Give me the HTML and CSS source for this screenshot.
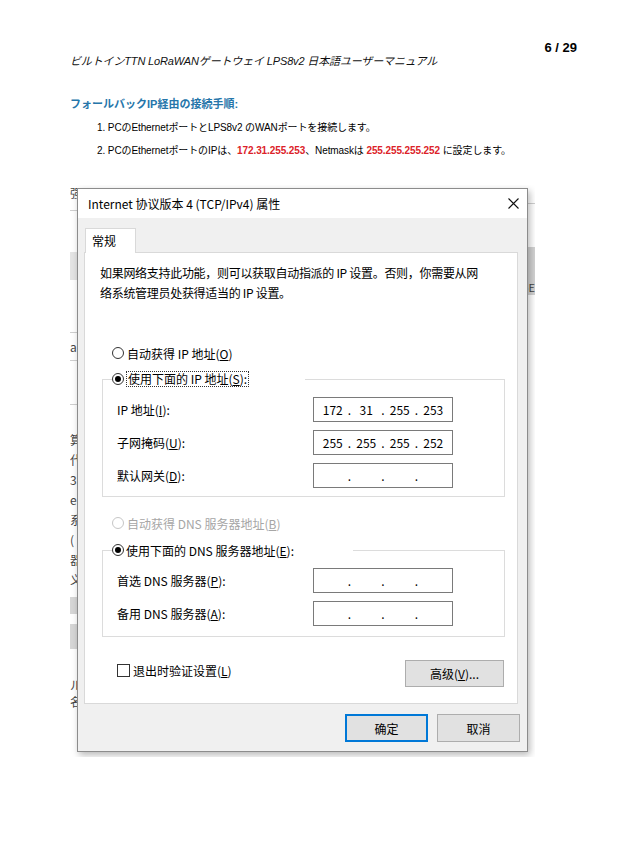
FILE: index.html
```html
<!DOCTYPE html>
<html lang="ja">
<head>
  <meta charset="UTF-8" />
  <title>LPS8v2 日本語ユーザーマニュアル - 6</title>
  <link rel="stylesheet" href="styles.css">
</head>
<body>
  <div class="page">
    <div class="pageno">6 / 29</div>
    <div class="doc-title">ビルトインTTN LoRaWANゲートウェイ LPS8v2 日本語ユーザーマニュアル</div>

    <h2 class="section">フォールバックIP経由の接続手順:</h2>
    <p class="step">1. PCのEthernetポートとLPS8v2 のWANポートを接続します。</p>
    <p class="step">2. PCのEthernetポートのIPは、<span class="red">172.31.255.253</span>、Netmaskは <span class="red">255.255.255.252</span> に設定します。</p>

    <!-- スクリーンショット -->
    <div class="shot" lang="zh-CN">
      <div class="bgwin">
        <div class="bg-left">
          <div class="ch">强</div>
          <div class="hline l1"></div>
          <div class="gblock b1"></div>
          <div class="hline l2"></div>
          <div class="ch ar">ar</div>
          <div class="hline l3"></div>
          <div class="hline l4"></div>
          <div class="chars">算<br>代<br>3r<br>e<br>系<br>(<br>器<br>义</div>
          <div class="gblock b2"></div>
          <div class="gblock b3"></div>
          <div class="chars c2">ル<br>名</div>
        </div>
        <div class="bg-right">
          <div class="hline r1"></div>
          <div class="gblock rb">IPoE</div>
        </div>
      </div>

      <div class="dialog">
        <div class="titlebar">
          <span>Internet 协议版本 4 (TCP/IPv4) 属性</span>
          <svg width="11" height="11" viewBox="0 0 11 11"><path d="M0.5 0.5l10 10M10.5 0.5l-10 10" stroke="#111" stroke-width="1.1" fill="none"/></svg>
        </div>
        <div class="dlg-body">
          <div class="tab">常规</div>
          <div class="panel">
            <p class="desc">如果网络支持此功能，则可以获取自动指派的 IP 设置。否则，你需要从网<br>络系统管理员处获得适当的 IP 设置。</p>

            <div class="opt first"><span class="radio"></span><span>自动获得 IP 地址(<u>O</u>)</span></div>

            <fieldset class="grp">
              <legend class="lg-ip"><span class="radio on"></span><span class="focus">使用下面的 IP 地址(<u>S</u>):</span></legend>
              <div class="frow top">
                <label>IP 地址(<u>I</u>):</label>
                <div class="ipbox"><span>172</span><span>.</span><span>31</span><span>.</span><span>255</span><span>.</span><span>253</span></div>
              </div>
              <div class="frow">
                <label>子网掩码(<u>U</u>):</label>
                <div class="ipbox"><span>255</span><span>.</span><span>255</span><span>.</span><span>255</span><span>.</span><span>252</span></div>
              </div>
              <div class="frow">
                <label>默认网关(<u>D</u>):</label>
                <div class="ipbox"><span></span><span>.</span><span></span><span>.</span><span></span><span>.</span><span></span></div>
              </div>
            </fieldset>

            <div class="opt disabled"><span class="radio off"></span><span>自动获得 DNS 服务器地址(<u>B</u>)</span></div>

            <fieldset class="grp dns">
              <legend class="lg-dns"><span class="radio on"></span><span>使用下面的 DNS 服务器地址(<u>E</u>):</span></legend>
              <div class="frow top">
                <label>首选 DNS 服务器(<u>P</u>):</label>
                <div class="ipbox"><span></span><span>.</span><span></span><span>.</span><span></span><span>.</span><span></span></div>
              </div>
              <div class="frow">
                <label>备用 DNS 服务器(<u>A</u>):</label>
                <div class="ipbox"><span></span><span>.</span><span></span><span>.</span><span></span><span>.</span><span></span></div>
              </div>
            </fieldset>

            <div class="bottom-row">
              <div class="check"><span class="box"></span><span>退出时验证设置(<u>L</u>)</span></div>
              <button class="btn adv">高级(<u>V</u>)...</button>
            </div>
          </div>

          <div class="footer">
            <button class="btn ok">确定</button>
            <button class="btn">取消</button>
          </div>
        </div>
      </div>
    </div>
  </div>
</body>
</html>
```

FILE: styles.css
```css
body { margin: 0; background: #fff; color: #000; font-family: "Liberation Sans", "Noto Sans CJK JP", sans-serif; }
.page {
  width: 638px;
  box-sizing: border-box;
  padding: 40px 61px 0 70px;
}
.pageno { text-align: right; font-weight: bold; font-size: 13px; line-height: 15px; }
.doc-title { font-style: italic; font-size: 11px; line-height: 13px; letter-spacing: -0.15px; color: #111; }
.section {
  margin: 29px 0 10px;
  font-size: 11px;
  line-height: 14px;
  font-weight: bold;
  color: #2676aa;
}
.step { margin: 0 0 9px 27px; font-size: 10px; line-height: 14px; letter-spacing: -0.1px; }
.step .red { color: #dc2229; font-weight: bold; }

/* screenshot */
.shot {
  display: grid;
  width: 465px;
  height: 572px;
  margin-top: 27px;
  overflow: hidden;
  font-family: "Noto Sans CJK SC", sans-serif;
  font-size: 12px;
}
.bgwin {
  grid-area: 1 / 1;
  display: flex;
  justify-content: space-between;
  background: #fff;
}
.bg-left { width: 24px; color: #444; }
.bg-left .ch { line-height: 16px; }
.hline { height: 1px; background: #cfcfcf; }
.gblock { background: #e4e4e4; }
.l1 { margin-top: 9px; }
.b1 { margin-top: 41px; height: 28px; }
.l2 { margin-top: 52px; }
.bg-left .ar { margin-top: 7px; line-height: 14px; }
.l3 { margin-top: 6px; }
.l4 { margin-top: 43px; }
.chars { margin-top: 25px; line-height: 20px; }
.b2 { margin-top: 7px; height: 17px; background: #d6d6d6; }
.b3 { margin-top: 10px; height: 25px; background: #d6d6d6; }
.chars.c2 { margin-top: 27px; line-height: 17px; }
.bg-right { width: 30px; }
.r1 { margin-top: 18px; }
.rb {
  margin-top: 43px;
  height: 48px;
  background: #d2d2d2;
  color: #444;
  font-size: 11px;
  display: flex;
  align-items: flex-end;
  justify-content: flex-end;
  line-height: 16px;
  white-space: nowrap;
  overflow: hidden;
}

.dialog {
  grid-area: 1 / 1;
  align-self: start;
  justify-self: start;
  margin: 3px 0 0 7px;
  width: 451px;
  box-sizing: border-box;
  border: 1px solid #8c8c8c;
  background: #f0f0f0;
  box-shadow: 2px 3px 7px rgba(0,0,0,0.28);
}
.titlebar {
  height: 29px;
  background: #fff;
  display: flex;
  align-items: center;
  justify-content: space-between;
  padding: 0 8px 0 10px;
}
.dlg-body { padding: 10px 9px 9px 6px; }
.tab {
  position: relative;
  z-index: 1;
  width: 51px;
  height: 25px;
  margin: 0 0 -1px 1px;
  box-sizing: border-box;
  border: 1px solid #d9d9d9;
  border-bottom: none;
  background: #fff;
  padding-left: 6px;
  line-height: 24px;
}
.panel {
  background: #fff;
  border: 1px solid #d9d9d9;
  padding: 10px 12px 16px 15px;
}
.desc { margin: 0; line-height: 20px; letter-spacing: -0.3px; }

.opt {
  display: flex;
  align-items: center;
  gap: 3px;
  height: 18px;
  padding-left: 12px;
}
.opt.first { margin-top: 41px; }
.opt.disabled { margin-top: 17px; color: #a6a6a6; }
.radio {
  flex: none;
  width: 12px;
  height: 12px;
  box-sizing: border-box;
  border: 1px solid #333;
  border-radius: 50%;
  display: grid;
  place-items: center;
}
.radio.on::after {
  content: "";
  width: 6px;
  height: 6px;
  border-radius: 50%;
  background: #000;
}
.radio.off { border-color: #c6c6c6; }

.grp {
  margin: 8px 0 0 2px;
  width: 403px;
  min-width: 0;
  box-sizing: border-box;
  padding: 0 0 8px;
  border: 1px solid #dcdcdc;
}
.grp.dns { margin-top: 9px; padding-bottom: 10px; }
.grp legend {
  display: flex;
  align-items: center;
  gap: 2px;
  height: 18px;
  margin-left: 9px;
  padding: 0;
  box-sizing: border-box;
}
.lg-ip { width: 193px; }
.lg-dns { width: 241px; }
.focus { border: 1px dotted #333; padding: 0 1px; line-height: 14px; }
.frow {
  display: flex;
  align-items: center;
  height: 25px;
  margin-top: 8px;
  padding-left: 14px;
}
.frow.top { margin-top: 9px; }
.frow label { width: 196px; }
.ipbox {
  width: 140px;
  height: 25px;
  box-sizing: border-box;
  border: 1px solid #7a7a7a;
  padding: 0 4px;
  display: grid;
  grid-template-columns: 1fr 4px 1fr 4px 1fr 4px 1fr;
  align-items: center;
  text-align: center;
  line-height: 23px;
}

.bottom-row {
  display: flex;
  justify-content: space-between;
  align-items: flex-start;
  margin-top: 23px;
  padding-left: 2px;
}
.check {
  display: flex;
  align-items: center;
  gap: 3px;
  height: 18px;
  margin: 1px 0 0 15px;
}
.check .box {
  width: 13px;
  height: 13px;
  box-sizing: border-box;
  border: 1px solid #333;
}
.btn {
  font: inherit;
  color: #000;
  background: #e1e1e1;
  border: 1px solid #adadad;
  padding: 0;
  width: 83px;
  height: 28px;
}
.btn.adv { width: 99px; height: 27px; margin-right: 1px; }
.btn.ok { border: 2px solid #0078d7; }
.footer {
  display: flex;
  justify-content: flex-end;
  gap: 9px;
  margin: 10px -2px 0 0;
}
```
